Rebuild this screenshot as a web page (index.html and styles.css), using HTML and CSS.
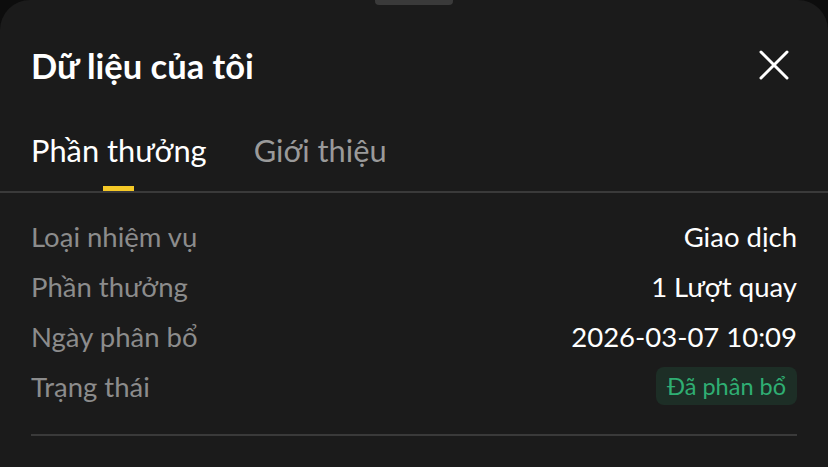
FILE: index.html
```html
<!DOCTYPE html>
<html lang="vi">
<head>
<meta charset="utf-8">
<link rel="stylesheet" href="styles.css">
</head>
<body>
<div class="sheet">
  <div class="handle"></div>
  <header class="head">
    <h1 class="title">Dữ liệu của tôi</h1>
    <button class="close" aria-label="Đóng">
      <svg width="30" height="30" viewBox="0 0 30 30"><path d="M2 2 L28 28 M28 2 L2 28" stroke="#fff" stroke-width="3" stroke-linecap="round"/></svg>
    </button>
  </header>
  <nav class="tabs">
    <div class="tab active">Phần thưởng<span class="bar"></span></div>
    <div class="tab">Giới thiệu</div>
  </nav>
  <div class="rows">
    <div class="row"><span class="label">Loại nhiệm vụ</span><span class="value">Giao dịch</span></div>
    <div class="row"><span class="label">Phần thưởng</span><span class="value">1 Lượt quay</span></div>
    <div class="row"><span class="label">Ngày phân bổ</span><span class="value">2026-03-07 10:09</span></div>
    <div class="row"><span class="label">Trạng thái</span><span class="badge">Đã phân bổ</span></div>
  </div>
  <div class="rule"></div>
</div>
</body>
</html>
```
FILE: styles.css
```css
html, body {
  margin: 0;
  padding: 0;
  background: #0d0d0d;
}
body {
  width: 828px;
  height: 467px;
  overflow: hidden;
  font-family: Lato, "Noto Sans", sans-serif;
}
.sheet {
  position: relative;
  background: #1b1b1b;
  height: 467px;
  border-radius: 30px 30px 0 0;
  padding: 0 31px;
  box-sizing: border-box;
}
.handle {
  position: absolute;
  left: 375px;
  top: 0;
  width: 78px;
  height: 5px;
  background: #3a3a3a;
  border-radius: 0 0 4px 4px;
}
.head {
  display: flex;
  align-items: center;
  justify-content: space-between;
  height: 130px;
}
.title {
  margin: 0;
  color: #fff;
  font-size: 34.5px;
  font-weight: 700;
}
.close {
  background: none;
  border: 0;
  padding: 0;
  margin-right: 8px;
  width: 30px;
  height: 30px;
  display: flex;
}
.tabs {
  display: flex;
  gap: 47px;
  margin: 0 -31px;
  padding: 1px 31px 0;
  border-bottom: 2px solid #3a3a3a;
  box-sizing: border-box;
  height: 63px;
}
.tab {
  position: relative;
  font-size: 30.8px;
  color: #9a9a9a;
  line-height: 40px;
}
.tab.active { color: #fff; }
.bar {
  position: absolute;
  left: 72px;
  top: 55px;
  width: 31px;
  height: 5px;
  background: #f5c927;
}
.rows {
  display: flex;
  flex-direction: column;
  padding-top: 18px;
}
.row {
  display: flex;
  justify-content: space-between;
  align-items: center;
  height: 50px;
  font-size: 27.5px;
}
.label { color: #8c8c8c; }
.value { color: #fff; }
.badge {
  color: #2fae73;
  background: #1d2e26;
  border-radius: 8px;
  font-size: 23.5px;
  padding: 0 11px;
  height: 38px;
  line-height: 38px;
}
.rule {
  margin-top: 23px;
  height: 2px;
  background: #3a3a3a;
}
```
